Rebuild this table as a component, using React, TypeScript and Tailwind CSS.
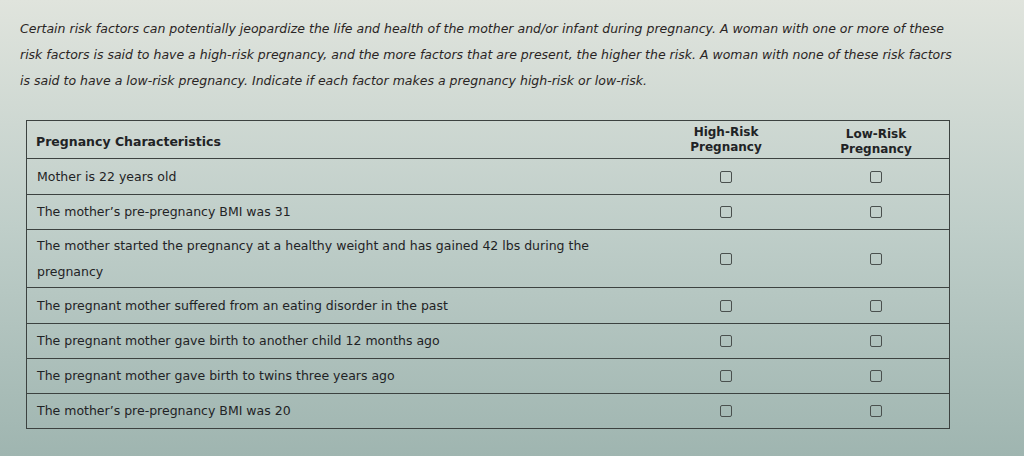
import React from "react";

const ROWS: { text: React.ReactNode; h: string }[] = [
  { text: "Mother is 22 years old", h: "h-[36px]" },
  { text: "The mother\u2019s pre-pregnancy BMI was 31", h: "h-[35px]" },
  {
    text: (
      <>
        The mother started the pregnancy at a healthy weight and has gained 42 lbs during the
        <br />
        pregnancy
      </>
    ),
    h: "h-[58px]",
  },
  { text: "The pregnant mother suffered from an eating disorder in the past", h: "h-[36px]" },
  { text: "The pregnant mother gave birth to another child 12 months ago", h: "h-[35px]" },
  { text: "The pregnant mother gave birth to twins three years ago", h: "h-[35px]" },
  { text: "The mother\u2019s pre-pregnancy BMI was 20", h: "h-[34px]" },
];

function Box() {
  return <span className="block h-[12px] w-[12px] rounded-[2px] border-[1.5px] border-[#4a504e]" />;
}

export default function App() {
  return (
    <div
      className="h-[456px] w-[1024px] overflow-hidden bg-linear-to-b from-[#e0e4dd] via-[#bfcec9] to-[#9fb5b0] text-[#1f2325]"
      style={{ fontFamily: '"DejaVu Sans", Verdana, sans-serif' }}
    >
      <p className="pl-[20px] pt-[16px] text-[12.5px] italic leading-[26px] text-[#2a2524]">
        Certain risk factors can potentially jeopardize the life and health of the mother and/or infant during pregnancy. A woman with one or more of these
        <br />
        risk factors is said to have a high-risk pregnancy, and the more factors that are present, the higher the risk. A woman with none of these risk factors
        <br />
        is said to have a low-risk pregnancy. Indicate if each factor makes a pregnancy high-risk or low-risk.
      </p>

      <div className="ml-[26px] mt-[26px] w-[924px] border border-[#3c4240] text-[12.5px]">
        <div className="grid h-[38px] grid-cols-[624px_150px_150px] items-center border-b border-[#3c4240]">
          <span className="pl-[9px] pt-[6px] font-bold">Pregnancy Characteristics</span>
          <span className="text-center text-[12px] font-bold leading-[15px]">
            High-Risk
            <br />
            Pregnancy
          </span>
          <span className="pt-[4px] text-center text-[12px] font-bold leading-[15px]">
            Low-Risk
            <br />
            Pregnancy
          </span>
        </div>
        {ROWS.map((r, i) => (
          <div
            key={i}
            className={`grid grid-cols-[624px_150px_150px] items-center ${r.h} ${
              i < ROWS.length - 1 ? "border-b border-[#3c4240]" : ""
            }`}
          >
            <span className="pl-[10px] leading-[26px]">{r.text}</span>
            <span className="flex justify-center">
              <Box />
            </span>
            <span className="flex justify-center">
              <Box />
            </span>
          </div>
        ))}
      </div>
    </div>
  );
}
